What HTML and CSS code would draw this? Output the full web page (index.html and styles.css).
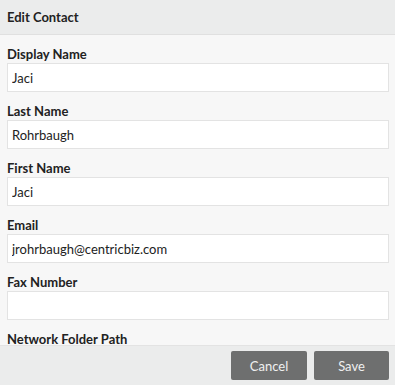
FILE: index.html
```html
<!DOCTYPE html>
<html lang="en">
<head>
    <meta charset="UTF-8" />
    <meta name="viewport" content="width=device-width, initial-scale=1" />
    <title>Edit Contact</title>
    <link rel="stylesheet" href="styles.css">
</head>
<body>
<div class="dialog">
    <div class="dialog-header">Edit Contact</div>

    <div class="dialog-body">
        <label class="field">Display Name
            <input type="text" value="Jaci">
        </label>
        <label class="field">Last Name
            <input type="text" value="Rohrbaugh">
        </label>
        <label class="field">First Name
            <input type="text" value="Jaci">
        </label>
        <label class="field">Email
            <input type="text" value="jrohrbaugh@centricbiz.com">
        </label>
        <label class="field">Fax Number
            <input type="text" value="">
        </label>
        <label class="field">Network Folder Path
            <input type="text" value="">
        </label>
    </div>

    <div class="dialog-footer">
        <button>Cancel</button>
        <button>Save</button>
    </div>
</div>
</body>
</html>
```

FILE: styles.css
```css
html, body { margin: 0; padding: 0; }
body { font-family: Lato, "Open Sans", sans-serif; color: #222; background: #f7f7f7; }
.dialog { display: flex; flex-direction: column; width: 395px; height: 385px; overflow: hidden; }
.dialog-header { flex: none; height: 35px; line-height: 35px; padding: 0 7px; background: #ebecec; border-bottom: 1px solid #e0e0e0; box-sizing: border-box; font-size: 13px; font-weight: bold; }
.dialog-body { flex: 1; overflow: hidden; padding: 0 6px 0 7px; background: #f7f7f7; }
.field { display: block; margin-top: 10px; line-height: 18px; font-size: 13px; font-weight: bold; }
.field input { display: block; width: 100%; height: 29px; box-sizing: border-box; margin: 0; padding: 0 4px; border: 1px solid #e3e3e3; background: #fff; font-family: inherit; font-size: 13px; font-weight: normal; color: #222; outline: none; }
.dialog-footer { flex: none; height: 40px; display: flex; justify-content: flex-end; align-items: center; gap: 7px; padding: 0 6px; background: #ebecec; border-top: 1px solid #e3e3e3; box-sizing: border-box; }
.dialog-footer button { height: 29px; padding: 0; border: none; border-radius: 2px; background: #6e6f6f; color: #f0f0f0; font-family: inherit; font-size: 13px; cursor: pointer; }
.dialog-footer button:first-child { width: 76px; }
.dialog-footer button:last-child { width: 75px; }
```
